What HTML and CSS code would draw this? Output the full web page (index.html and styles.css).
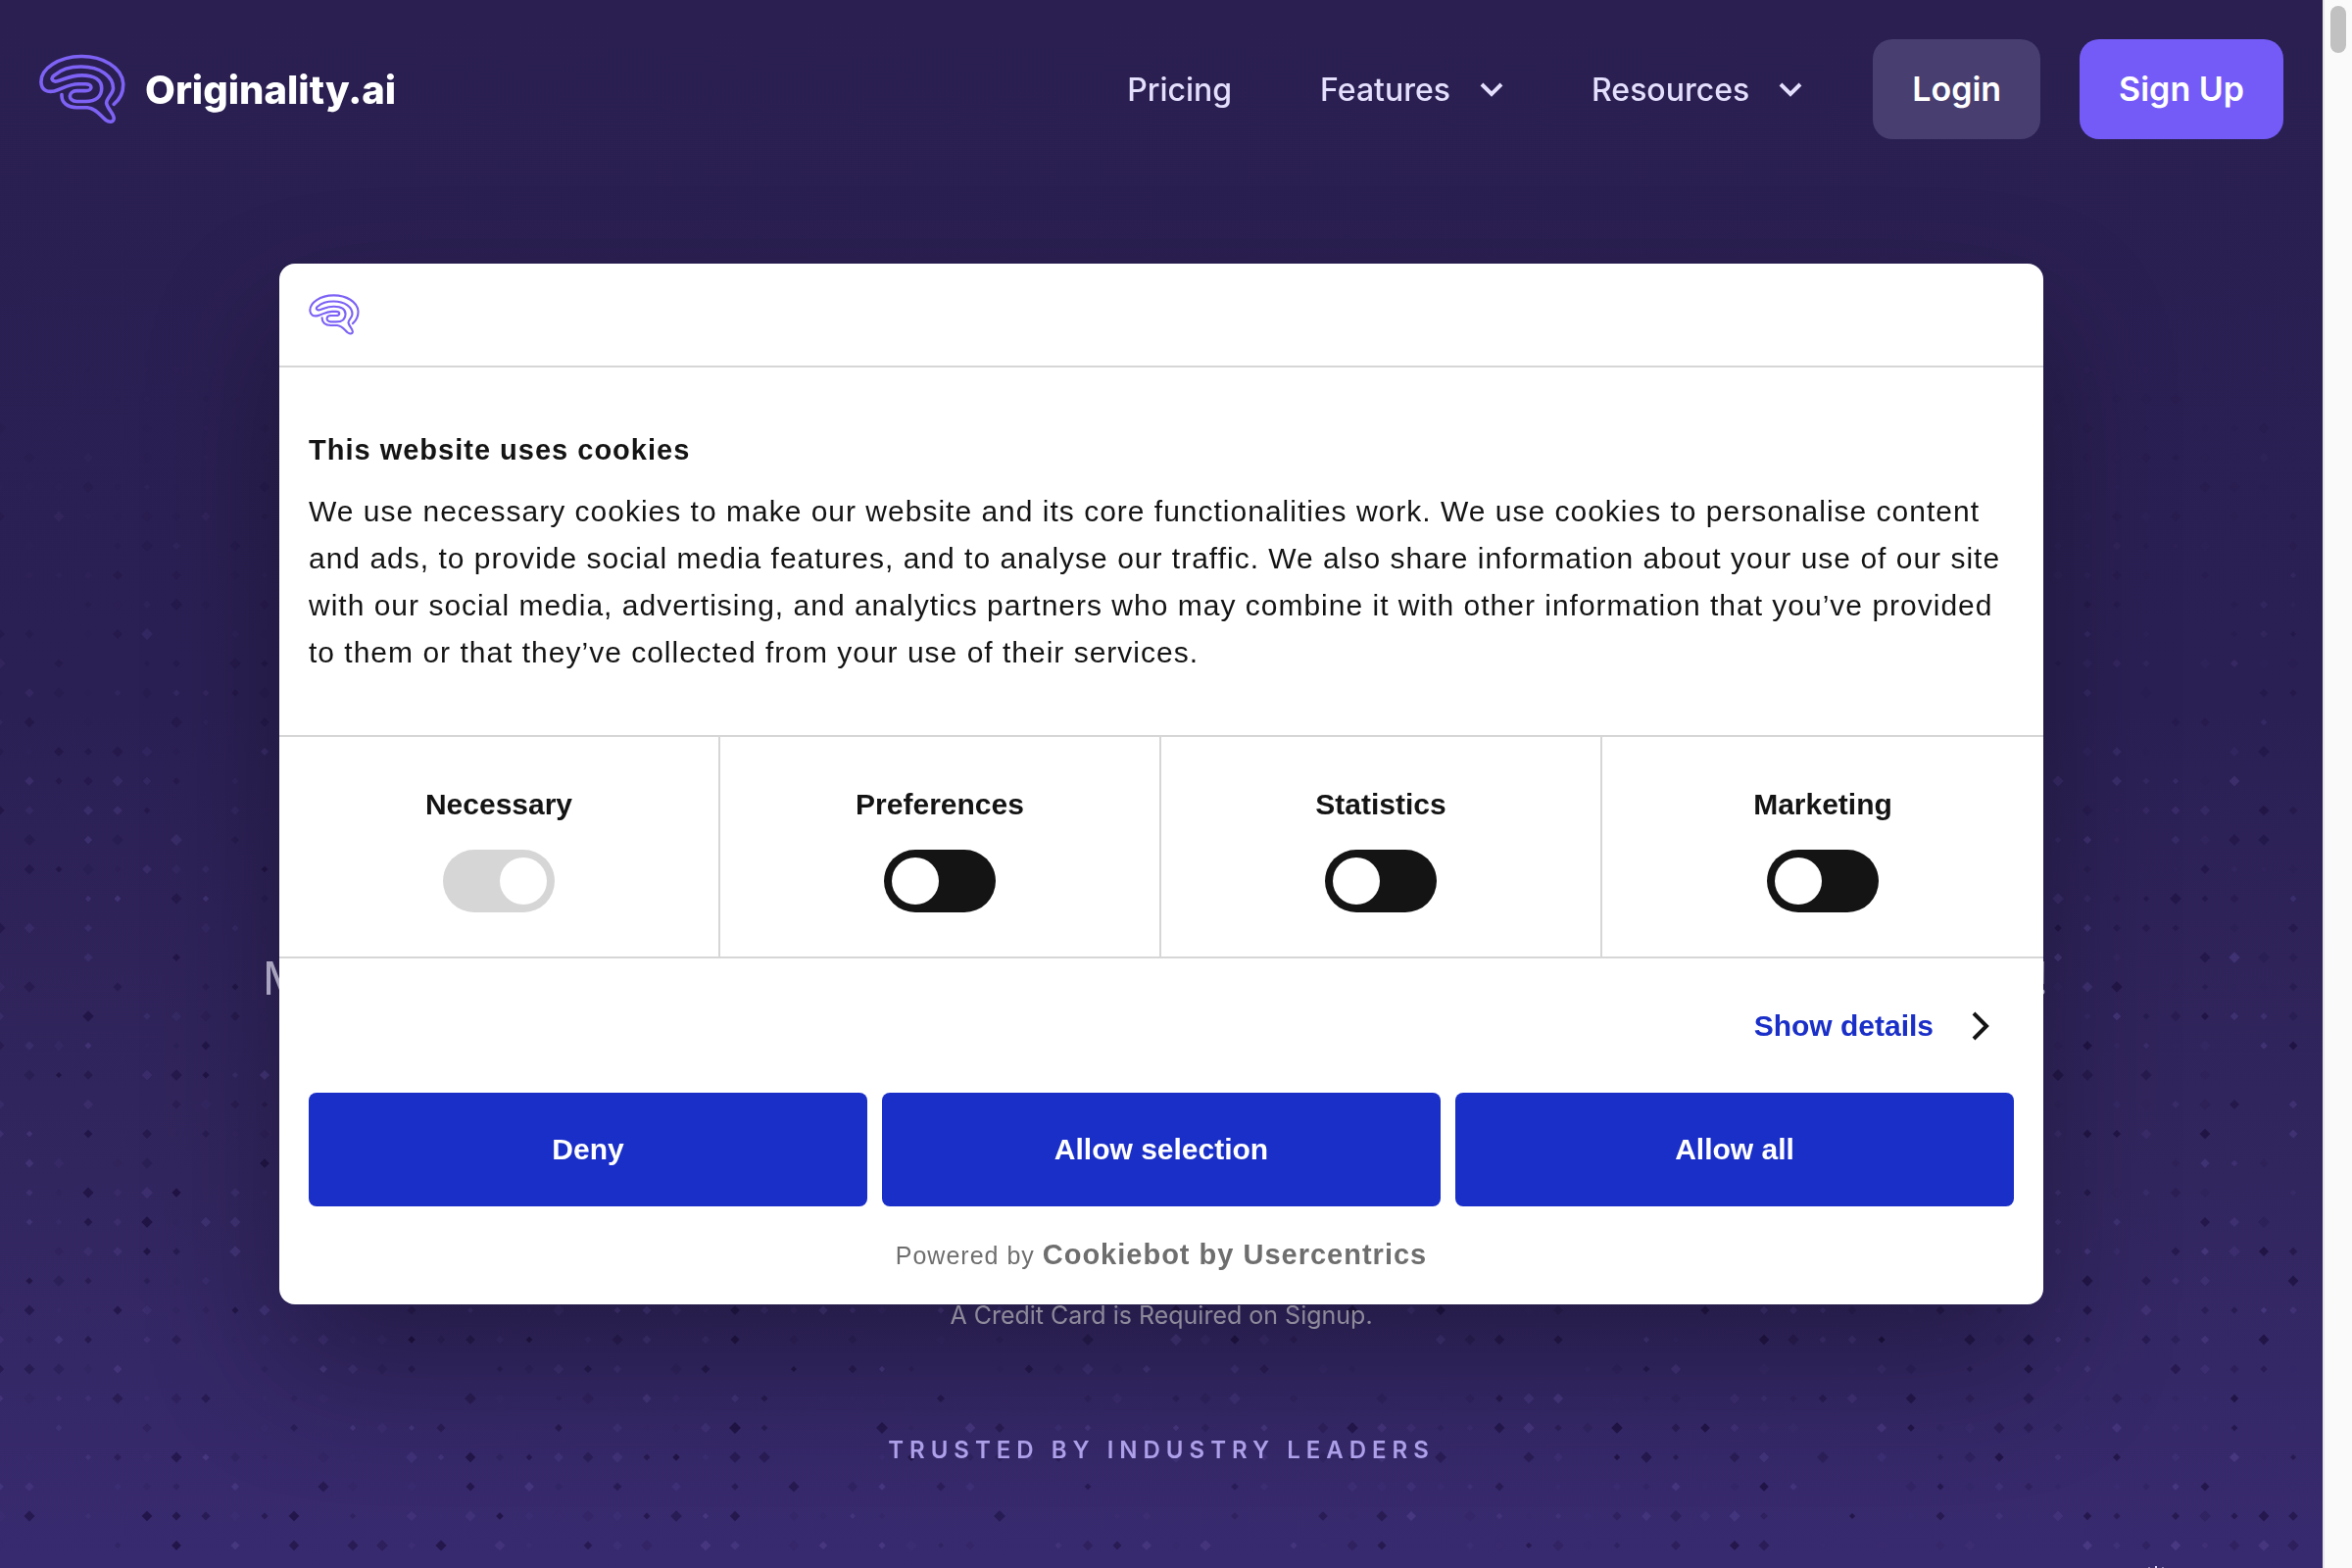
FILE: index.html
```
<!DOCTYPE html>
<html lang="en">
<head>
  <meta charset="UTF-8" />
  <meta name="viewport" content="width=device-width, initial-scale=1.0">
  <title>Originality.ai</title>
  <link rel="stylesheet" href="styles.css">
</head>
<body>

<svg class="sprite" aria-hidden="true">
  <symbol id="brain" viewBox="118 104 268 218">
    <path d="M350 260C372 242 380 220 379 195C375 145 315 110 248 111C180 112 122 148 124 192C125 215 142 224 165 219C190 213 205 198 240 197L262 197C285 197 285 218 262 218L235 218C208 218 205 250 235 251L262 251C295 251 312 235 312 210C312 185 290 170 250 170C215 170 195 183 175 188C158 192 152 178 165 170C185 152 215 143 248 143C310 143 348 175 348 210C348 228 327 240 327 256C330 275 352 290 350 305C348 316 336 317 325 309C308 296 295 272 268 270L235 270C205 270 187 255 188 230"/>
  </symbol>
</svg>

<div class="window">
  <div class="page">
    <canvas class="dots" id="dots"></canvas>

    <header class="header">
      <a class="logo" href="#">
        <svg class="logo-icon"><use href="#brain"/></svg>
        <span>Originality.ai</span>
      </a>
      <nav class="nav">
        <a href="#">Pricing</a>
        <a href="#">Features
          <svg class="chevron" viewBox="0 0 24 16"><path d="M2 3l10 10L22 3"/></svg>
        </a>
        <a href="#">Resources
          <svg class="chevron" viewBox="0 0 24 16"><path d="M2 3l10 10L22 3"/></svg>
        </a>
      </nav>
      <div class="actions">
        <a class="btn btn-login" href="#">Login</a>
        <a class="btn btn-signup" href="#">Sign Up</a>
      </div>
    </header>

    <main class="hero">
      <p class="lead">Most Accurate AI Detector, Plagiarism Checker and Fact Checker for Publishers!</p>
      <p class="note">A Credit Card is Required on Signup.</p>
      <p class="trusted">TRUSTED BY INDUSTRY LEADERS</p>
    </main>

    <svg class="spark" viewBox="0 0 16 2"><path d="M0 2l1-1 1 1M7 0h2v2h-2zM14 2l1-1 1 1"/></svg>

    <!-- Cookie consent -->
    <div class="overlay">
      <section class="dialog" role="dialog" aria-labelledby="cookie-title">
        <div class="dialog-head">
          <svg class="dialog-logo"><use href="#brain"/></svg>
        </div>
        <div class="dialog-body">
          <h2 id="cookie-title">This website uses cookies</h2>
          <p>We use necessary cookies to make our website and its core functionalities work. We use cookies to personalise content and ads, to provide social media features, and to analyse our traffic. We also share information about your use of our site with our social media, advertising, and analytics partners who may combine it with other information that you’ve provided to them or that they’ve collected from your use of their services.</p>
        </div>
        <div class="choices">
          <label class="choice">Necessary
            <input type="checkbox" checked disabled>
          </label>
          <label class="choice">Preferences
            <input type="checkbox">
          </label>
          <label class="choice">Statistics
            <input type="checkbox">
          </label>
          <label class="choice">Marketing
            <input type="checkbox">
          </label>
        </div>
        <div class="dialog-foot">
          <a class="details" href="#">Show details
            <svg class="details-arrow" viewBox="0 0 20 32"><path d="M3 3l13 13L3 29"/></svg>
          </a>
          <div class="buttons">
            <button type="button">Deny</button>
            <button type="button">Allow selection</button>
            <button type="button">Allow all</button>
          </div>
          <p class="powered">Powered by <a href="#">Cookiebot by Usercentrics</a></p>
        </div>
      </section>
    </div>
  </div>

  <div class="scrollbar"><div class="thumb"></div></div>
</div>

<script src="dots.js"></script>
</body>
</html>
```
FILE: styles.css
```
* { box-sizing: border-box; }
body { margin: 0; font-family: Inter, "Liberation Sans", sans-serif; background: #2a1f50; }
a { color: inherit; text-decoration: none; }
p, h2 { margin: 0; }

.sprite { display: none; }
.window { display: flex; height: 100vh; overflow: hidden; }
.page { position: relative; flex: 1; overflow: hidden; background: linear-gradient(#2a1f50 0%, #2b2054 45%, #32265f 75%, #382a6f 100%); }
.dots { position: absolute; inset: 0; width: 100%; height: 100%; }

.scrollbar { width: 30px; padding: 6px 6px 0 6px; background: #fafafa; border-left: 2px solid #e6e6e8; }
.thumb { width: 16px; height: 48px; border-radius: 8px; background: #c1c1c1; }

/* header */
.header { position: relative; display: flex; align-items: center; padding: 40px; }
.logo { display: flex; align-items: center; gap: 20px; margin-right: auto; color: #fff; font-size: 40px; font-weight: 800; }
.logo-icon { width: 88px; height: 72px; }
.logo-icon, .dialog-logo { fill: none; stroke: #7d62f5; stroke-width: 11; stroke-linecap: round; }
.nav { display: flex; align-items: center; gap: 90px; margin-right: 72px; color: #e4dffc; font-size: 32px; font-weight: 500; }
.nav a { display: flex; align-items: center; gap: 30px; }
.chevron { width: 24px; height: 16px; fill: none; stroke: #e4dffc; stroke-width: 4; }
.actions { display: flex; gap: 40px; }
.btn { padding: 0 40px; border-radius: 20px; color: #fff; font-size: 34px; font-weight: 600; line-height: 102px; }
.btn-login { background: #483e70; }
.btn-signup { background: #745bf7; }

/* hero */
.hero { position: relative; padding: 782px 280px 0 268px; text-align: center; }
.lead { color: #c3bedd; font-size: 46px; line-height: 68px; text-align-last: justify; }
.note, .trusted { margin-left: 12px; line-height: 36px; }
.note { margin-top: 292px; color: #b9b3c9; font-size: 25px; }
.trusted { margin-top: 102px; color: #b3a4f0; font-size: 24px; font-weight: 600; letter-spacing: 6px; }
.spark { position: absolute; right: 162px; bottom: 0; width: 16px; height: 2px; fill: #d9d4f2; }

/* cookie dialog */
.overlay { position: absolute; inset: 0; display: grid; place-items: center; }
.dialog { width: 1800px; max-width: 90%; overflow: hidden; border-radius: 16px; background: #fff; color: #141414; font-family: "Liberation Sans", Arial, sans-serif; font-size: 30px; letter-spacing: 1px; box-shadow: 0 64px 136px rgba(0, 0, 0, 0.3); }
.dialog-head { display: flex; padding: 31px 30px; border-bottom: 2px solid #d6d6d6; }
.dialog-logo { width: 52px; height: 42px; }
.dialog-body { padding: 60px 30px; line-height: 48px; }
.dialog-body h2 { margin-bottom: 15px; font-size: 29px; font-weight: 700; }

.choices { display: grid; grid-template-columns: repeat(4, 1fr); border-top: 2px solid #d6d6d6; border-bottom: 2px solid #d6d6d6; }
.choice { display: flex; flex-direction: column; align-items: center; gap: 22px; padding: 45px 0; border-right: 2px solid #d6d6d6; font-weight: 700; line-height: 48px; letter-spacing: 0; }
.choice:last-child { border-right: none; }
.choice input { appearance: none; width: 114px; height: 64px; margin: 0; padding: 8px; border-radius: 32px; background: #141414; }
.choice input::before { content: ""; display: block; width: 48px; height: 48px; border-radius: 50%; background: #fff; }
.choice input:checked::before { margin-left: auto; }
.choice input:disabled { background: #d6d6d6; }

.dialog-foot { padding: 45px 30px 25px; }
.details { display: flex; align-items: center; justify-content: flex-end; gap: 38px; margin-right: 24px; color: #1a2fc8; font-weight: 700; line-height: 48px; letter-spacing: 0; }
.details-arrow { width: 20px; height: 32px; fill: none; stroke: #141414; stroke-width: 4; }
.buttons { display: grid; grid-template-columns: repeat(3, 1fr); gap: 15px; margin: 44px 0 24px; }
.buttons button { height: 116px; border: none; border-radius: 8px; background: #1a2fc8; color: #fff; font: inherit; font-weight: 700; }
.powered { color: #6e6e6e; font-size: 25px; line-height: 50px; text-align: center; }
.powered a { font-size: 29px; font-weight: 700; }
```
FILE: dots.js
```
const canvas = document.getElementById('dots');
const ctx = canvas.getContext('2d');
const STEP = 30;
let seed = 7;

function rand() {
  seed = (seed * 16807) % 2147483647;
  return seed / 2147483647;
}

canvas.width = canvas.clientWidth;
canvas.height = canvas.clientHeight;

// diamonds on a grid, fading in down the page
for (let y = 377; y < canvas.height; y += STEP) {
  const fade = Math.min(1, (y - 347) / 600);
  for (let x = 0; x < canvas.width; x += STEP) {
    const dark = rand() < 0.5;
    const alpha = rand() * fade;
    const r = 3 + rand() * 3;
    if (rand() < 0.3) continue;
    ctx.fillStyle = dark ? `rgba(28, 16, 62, ${alpha * 0.8})` : `rgba(96, 78, 160, ${alpha * 0.4})`;
    ctx.beginPath();
    ctx.moveTo(x, y - r);
    ctx.lineTo(x + r, y);
    ctx.lineTo(x, y + r);
    ctx.lineTo(x - r, y);
    ctx.fill();
  }
}
```
